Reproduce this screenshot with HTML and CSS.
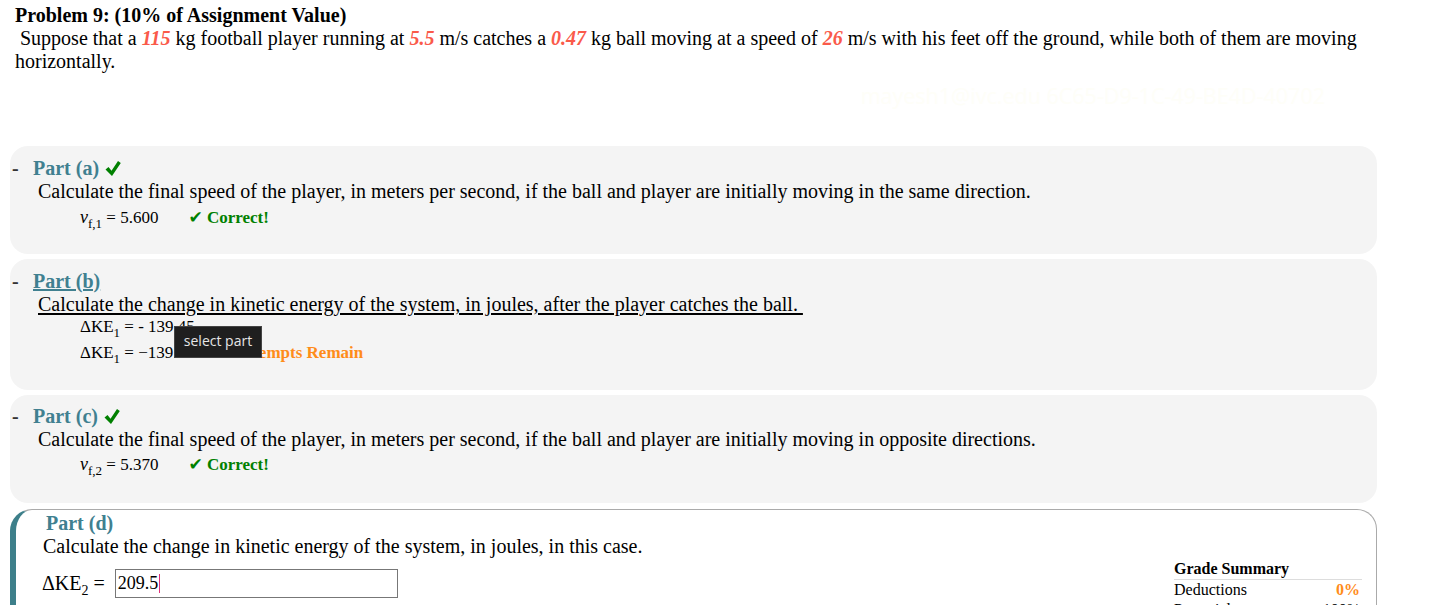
FILE: index.html
```html
<!DOCTYPE html>
<html>
<head>
<meta charset="utf-8">
<link rel="stylesheet" href="styles.css">
</head>
<body>
<div class="page">
  <div class="problem">
    <div class="problem-title">Problem 9: (10% of Assignment Value)</div>
    <div class="problem-text">&nbsp;Suppose that a <b class="num">115</b> kg football player running at <b class="num">5.5</b> m/s catches a <b class="num">0.47</b> kg ball moving at a speed of <b class="num">26</b> m/s with his feet off the ground, while both of them are moving horizontally.</div>
  </div>
  <div class="watermark-row"><span class="watermark">mayesh1@ivc.edu 6C65-D9-1C-49-BE4D-40702</span></div>

  <div class="part part-a">
    <div class="part-head"><span class="dash">-</span><span class="part-title">Part (a)</span><svg class="check" width="16" height="17" viewBox="0 0 16 17"><polygon points="0.5,9.5 3.5,7 6.5,10.8 13,1 15.8,3 7,16" fill="#008000"/></svg></div>
    <div class="part-desc">Calculate the final speed of the player, in meters per second, if the ball and player are initially moving in the same direction.</div>
    <div class="answer"><span class="math"><i>v</i><sub>f,1</sub> = 5.600</span><span class="correct">✔ Correct!</span></div>
  </div>

  <div class="part part-b">
    <div class="part-head"><span class="dash">-</span><span class="part-title hover">Part (b)</span></div>
    <div class="part-desc"><span class="underlined">Calculate the change in kinetic energy of the system, in joules, after the player catches the ball.&nbsp;</span></div>
    <div class="answer answer-tight"><span class="math">ΔKE<sub>1</sub> = - 139.45</span></div>
    <div class="answer answer-second"><span class="math">ΔKE<sub>1</sub> = −139.45</span><span class="wrong">✘</span><span class="attempts">Attempts Remain</span></div>
    <div class="tooltip">select part</div>
  </div>

  <div class="part part-c">
    <div class="part-head"><span class="dash">-</span><span class="part-title">Part (c)</span><svg class="check" width="16" height="17" viewBox="0 0 16 17"><polygon points="0.5,9.5 3.5,7 6.5,10.8 13,1 15.8,3 7,16" fill="#008000"/></svg></div>
    <div class="part-desc">Calculate the final speed of the player, in meters per second, if the ball and player are initially moving in opposite directions.</div>
    <div class="answer"><span class="math"><i>v</i><sub>f,2</sub> = 5.370</span><span class="correct">✔ Correct!</span></div>
  </div>

  <div class="part-active">
    <div class="active-title">Part (d)</div>
    <div class="active-desc">Calculate the change in kinetic energy of the system, in joules, in this case.</div>
    <div class="active-row">
      <div class="input-group">
        <span class="input-label">ΔKE<sub>2</sub> = </span>
        <div class="input-box">209.5<span class="caret"></span></div>
      </div>
      <div class="grade-summary">
        <div class="gs-title">Grade Summary</div>
        <div class="gs-row"><span>Deductions</span><span class="gs-val">0%</span></div>
        <div class="gs-row"><span>Potential</span><span class="gs-plain">100%</span></div>
      </div>
    </div>
  </div>
</div>
</body>
</html>
```

FILE: styles.css
```css
html, body {
  margin: 0;
  padding: 0;
  background: #fff;
  overflow: hidden;
}
body {
  font-family: "Liberation Serif", "Times New Roman", serif;
  color: #000;
  height: 605px;
}
.page {
  padding: 4px 65px 0 10px;
}
.problem {
  padding-left: 5px;
  font-size: 20px;
  line-height: 23px;
}
.problem-title {
  font-weight: bold;
}
.num {
  color: #fa5a4a;
  font-style: italic;
}
.watermark-row {
  height: 73px;
  box-sizing: border-box;
  display: flex;
  align-items: flex-start;
  justify-content: flex-end;
  padding: 8px 52px 0 0;
}
.watermark {
  font-family: "Open Sans", sans-serif;
  font-size: 21.5px;
  line-height: 29px;
  color: #fefef8;
}
.part {
  position: relative;
  background: #f4f4f4;
  border-radius: 18px;
  padding: 11px 0 26px 2px;
  margin-bottom: 5px;
}
.part-b {
  padding-bottom: 27px;
}
.part-c {
  padding: 10px 0 28px 2px;
  margin-bottom: 6px;
}
.part-head {
  display: flex;
  align-items: baseline;
  font-size: 20px;
  line-height: 23px;
  font-weight: bold;
}
.dash {
  width: 21px;
  color: #333;
}
.part-title {
  color: #408090;
}
.part-title.hover {
  text-decoration: underline;
}
.check {
  margin-left: 6px;
  align-self: center;
}
.part-desc {
  font-size: 20px;
  line-height: 23px;
  padding-left: 26px;
}
.underlined {
  text-decoration: underline;
  text-underline-offset: 2px;
}
.answer {
  display: flex;
  align-items: baseline;
  padding-left: 68px;
  font-size: 17px;
  line-height: 20px;
  margin-top: 4px;
}
.part-c .answer {
  margin-top: 3px;
}
.answer.answer-tight {
  margin-top: 1px;
}
.answer.answer-second {
  margin-top: 6px;
}
.math {
  font-family: "Liberation Serif", serif;
}
.math i {
  font-size: 18px;
}
.math sub {
  font-size: 13px;
  line-height: 0;
  vertical-align: -5px;
}
.correct {
  color: #008000;
  font-weight: bold;
  margin-left: 30px;
}
.correct::first-letter {
  font-family: "DejaVu Sans", sans-serif;
}
.wrong {
  color: #e00;
  margin-left: 21px;
  font-family: "DejaVu Sans", sans-serif;
  font-size: 14px;
}
.attempts {
  color: #ff8c1a;
  font-weight: bold;
  margin-left: 8px;
}
.tooltip {
  position: absolute;
  left: 164px;
  top: 67px;
  width: 88px;
  height: 32px;
  box-sizing: border-box;
  background: #1f1f1f;
  border: 1px solid #444;
  color: #e6e6e6;
  font-family: "Open Sans", sans-serif;
  font-size: 14px;
  line-height: 28px;
  text-align: center;
}
.part-active {
  border: 1px solid #aaa;
  border-left: 6px solid #3d7f8a;
  border-radius: 22px 20px 0 0;
  border-bottom: none;
  padding: 2px 14px 0 0;
  height: 120px;
}
.active-title {
  font-size: 20px;
  line-height: 23px;
  font-weight: bold;
  color: #408090;
  padding-left: 30px;
}
.active-desc {
  font-size: 20px;
  line-height: 23px;
  padding-left: 27px;
}
.active-row {
  display: flex;
  justify-content: space-between;
  align-items: flex-start;
  margin-top: 1px;
}
.input-group {
  display: flex;
  align-items: center;
  margin-top: 10px;
  padding-left: 26px;
}
.input-label {
  font-size: 20px;
  white-space: pre;
  margin-right: 5px;
}
.input-label sub {
  font-size: 14px;
  line-height: 0;
  vertical-align: -5px;
}
.input-box {
  width: 283px;
  height: 29px;
  box-sizing: border-box;
  border: 1px solid #777;
  font-size: 18px;
  line-height: 27px;
  padding-left: 2px;
  display: flex;
  align-items: center;
}
.caret {
  display: inline-block;
  width: 1px;
  height: 19px;
  background: #e0307a;
  margin-left: 1px;
}
.grade-summary {
  width: 188px;
  font-size: 16px;
}
.gs-title {
  font-weight: bold;
  line-height: 19px;
  border-bottom: 1px solid #ddd;
  padding-bottom: 1px;
}
.gs-row {
  display: flex;
  justify-content: space-between;
  line-height: 20px;
}
.gs-val {
  color: #ff8c1a;
  font-weight: bold;
  padding-right: 2px;
}
.gs-plain {
  padding-right: 2px;
}
```
